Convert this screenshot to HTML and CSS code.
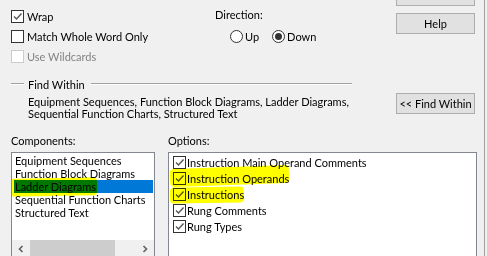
FILE: index.html
```html
<!DOCTYPE html>
<html lang="en">
<head>
  <meta charset="UTF-8" />
  <title>Find</title>
  <link rel="stylesheet" href="styles.css">
</head>
<body>
  <div class="dialog">
    <div class="top">
      <div class="flags">
        <div class="check-row">
          <span class="box checked"><svg viewBox="0 0 11 11"><path d="M2 5.5 L4.5 8 L9.5 2.5" /></svg></span>
          <span>Wrap</span>
        </div>
        <div class="check-row">
          <span class="box"></span>
          <span>Match Whole Word Only</span>
        </div>
        <div class="check-row disabled">
          <span class="box"></span>
          <span>Use Wildcards</span>
        </div>
      </div>
      <div class="direction">
        <div class="label">Direction:</div>
        <div class="radios">
          <span class="radio"></span><span class="radio-text">Up</span>
          <span class="radio on"></span><span class="radio-text">Down</span>
        </div>
      </div>
      <div class="buttons">
        <div class="btn hidden-top"></div>
        <div class="btn help">Help</div>
      </div>
    </div>

    <div class="group-head">
      <span class="line short"></span>
      <span class="group-title">Find Within</span>
      <span class="line long"></span>
    </div>
    <div class="within">
      <div class="within-text">
        Equipment Sequences, Function Block Diagrams, Ladder Diagrams,<br>
        Sequential Function Charts, Structured Text
      </div>
      <div class="btn within-btn">&lt;&lt; Find Within</div>
    </div>

    <div class="lists">
      <div class="col components">
        <div class="label">Components:</div>
        <div class="listbox">
          <div class="item">Equipment Sequences</div>
          <div class="item">Function Block Diagrams</div>
          <div class="item selected">Ladder Diagrams</div>
          <div class="item">Sequential Function Charts</div>
          <div class="item">Structured Text</div>
          <div class="hscroll">
            <svg class="arrow" viewBox="0 0 8 8"><path d="M5.5 1 L2.5 4 L5.5 7" /></svg>
            <div class="track"><div class="thumb"></div></div>
            <svg class="arrow" viewBox="0 0 8 8"><path d="M2.5 1 L5.5 4 L2.5 7" /></svg>
          </div>
          <div class="marker m-ladder"></div>
        </div>
      </div>
      <div class="col options">
        <div class="label">Options:</div>
        <div class="listbox">
          <div class="opt"><span class="box checked"><svg viewBox="0 0 11 11"><path d="M2 5.5 L4.5 8 L9.5 2.5" /></svg></span>Instruction Main Operand Comments</div>
          <div class="opt"><span class="box checked"><svg viewBox="0 0 11 11"><path d="M2 5.5 L4.5 8 L9.5 2.5" /></svg></span>Instruction Operands</div>
          <div class="opt"><span class="box checked"><svg viewBox="0 0 11 11"><path d="M2 5.5 L4.5 8 L9.5 2.5" /></svg></span>Instructions</div>
          <div class="opt"><span class="box checked"><svg viewBox="0 0 11 11"><path d="M2 5.5 L4.5 8 L9.5 2.5" /></svg></span>Rung Comments</div>
          <div class="opt"><span class="box checked"><svg viewBox="0 0 11 11"><path d="M2 5.5 L4.5 8 L9.5 2.5" /></svg></span>Rung Types</div>
          <div class="marker m-operands"></div>
          <div class="marker m-instr"></div>
        </div>
      </div>
    </div>
  </div>
</body>
</html>
```

FILE: styles.css
```css
body {
  margin: 0;
  background: #f0f0f0;
  font-family: Lato, "Liberation Sans", Arial, sans-serif;
  font-size: 11px;
  color: #000;
}
.dialog {
  width: 484px;
  height: 256px;
  border-right: 1px solid #a0a0a0;
  overflow: hidden;
  white-space: nowrap;
}

/* top area */
.top {
  display: flex;
  height: 77px;
}
.flags {
  width: 204px;
  padding: 10px 0 0 11px;
}
.check-row {
  display: flex;
  align-items: center;
  height: 13px;
  margin-bottom: 7px;
}
.box {
  box-sizing: border-box;
  width: 13px;
  height: 13px;
  border: 1px solid #333;
  background: #fff;
  margin-right: 3px;
  flex: none;
  display: flex;
}
.box svg {
  width: 11px;
  height: 11px;
}
.box path {
  fill: none;
  stroke: #555;
  stroke-width: 1.4;
}
.check-row.disabled {
  color: #838383;
}
.check-row.disabled .box {
  border-color: #ccc;
}
.direction {
  width: 181px;
  padding-top: 8px;
}
.label {
  height: 14px;
  line-height: 14px;
}
.radios {
  display: flex;
  align-items: center;
  padding: 8px 0 0 15px;
}
.radio {
  box-sizing: border-box;
  width: 13px;
  height: 13px;
  border: 1px solid #333;
  border-radius: 50%;
  background: #fff;
  display: flex;
  align-items: center;
  justify-content: center;
}
.radio.on::after {
  content: "";
  width: 7px;
  height: 7px;
  border-radius: 50%;
  background: #333;
}
.radio-text {
  margin: 0 13px 0 2px;
}
.btn {
  box-sizing: border-box;
  width: 79px;
  height: 21px;
  border: 1px solid #adadad;
  background: #e1e1e1;
  display: flex;
  align-items: center;
  justify-content: center;
  flex: none;
}
.hidden-top {
  margin-top: -15px;
}
.help {
  margin-top: 7px;
}

/* find within group */
.group-head {
  display: flex;
  align-items: center;
  width: 341px;
  height: 14px;
  padding-left: 11px;
}
.line {
  border-top: 1px solid #a0a0a0;
  border-bottom: 1px solid #fff;
  height: 0;
}
.line.short {
  width: 13px;
}
.line.long {
  flex: 1;
}
.group-title {
  margin: 0 6px 0 4px;
}
.within {
  display: flex;
  padding: 2px 0 0 28px;
  height: 41px;
}
.within-text {
  width: 368px;
  padding-top: 3px;
  line-height: 12px;
}

/* lists */
.lists {
  display: flex;
  padding-left: 11px;
  gap: 13px;
}
.col .label {
  margin-bottom: 4px;
}
.listbox {
  position: relative;
  box-sizing: border-box;
  border: 1px solid #828790;
  background: #fff;
  height: 120px;
  padding: 1px 1px 0 1px;
  overflow: hidden;
}
.components .listbox {
  width: 144px;
}
.options .listbox {
  width: 309px;
}
.item {
  height: 13px;
  line-height: 13px;
  padding-left: 1px;
  margin-left: 1px;
}
.item.selected {
  background: #0078d7;
  color: #000;
}
.hscroll {
  position: absolute;
  left: 0;
  right: 0;
  top: 87px;
  height: 17px;
  background: #f0f0f0;
  display: flex;
  align-items: center;
}
.arrow {
  width: 18px;
  height: 8px;
}
.arrow path {
  fill: none;
  stroke: #606060;
  stroke-width: 1.6;
}
.track {
  flex: 1;
  height: 17px;
}
.thumb {
  width: 85px;
  height: 17px;
  background: #cdcdcd;
}
.opt {
  display: flex;
  align-items: center;
  height: 16px;
  padding-left: 3px;
}
.opt .box {
  margin-right: 1px;
}

/* highlighter marks over the screenshot */
.marker {
  position: absolute;
  background: #ffff00;
  mix-blend-mode: multiply;
  border-radius: 4px;
}
.m-ladder {
  left: -2px;
  top: 25px;
  width: 87px;
  height: 18px;
  transform: rotate(-1deg);
}
.m-operands {
  left: 1px;
  top: 14px;
  width: 119px;
  height: 18px;
  transform: rotate(-2deg);
}
.m-instr {
  left: 1px;
  top: 34px;
  width: 74px;
  height: 16px;
  transform: rotate(-1deg);
}
```
